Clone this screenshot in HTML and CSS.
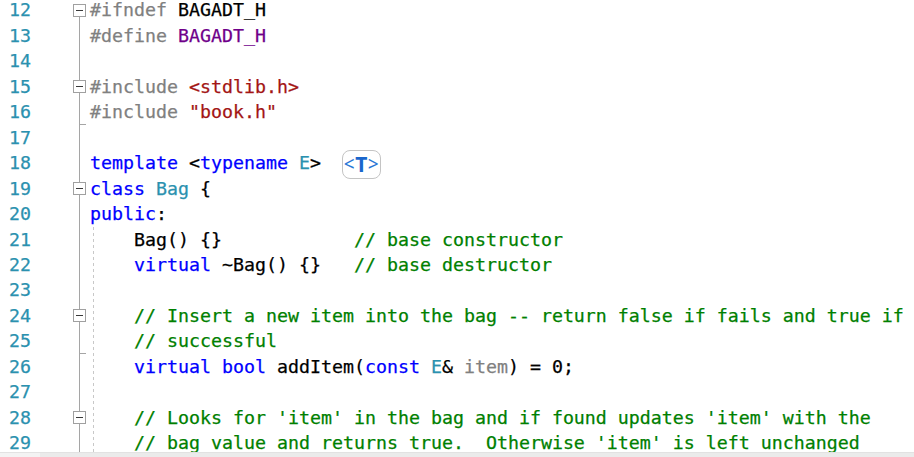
FILE: index.html
```html
<!DOCTYPE html>
<html>
<head>
<meta charset="utf-8">
<link rel="stylesheet" href="styles.css">
</head>
<body>
<div class="editor">
  <div class="lines">
    <div class="row"><span class="ln">12</span><span class="fold fs"><i class="fb"></i></span><span class="code"><span class="pp">#ifndef</span> BAGADT_H</span></div>
    <div class="row"><span class="ln">13</span><span class="fold v"></span><span class="code"><span class="pp">#define</span> <span class="mac">BAGADT_H</span></span></div>
    <div class="row"><span class="ln">14</span><span class="fold v"></span><span class="code"></span></div>
    <div class="row"><span class="ln">15</span><span class="fold v"><i class="fb"></i></span><span class="code"><span class="pp">#include</span> <span class="str">&lt;stdlib.h&gt;</span></span></div>
    <div class="row"><span class="ln">16</span><span class="fold ve"></span><span class="code"><span class="pp">#include</span> <span class="str">"book.h"</span></span></div>
    <div class="row"><span class="ln">17</span><span class="fold v"></span><span class="code"></span></div>
    <div class="row"><span class="ln">18</span><span class="fold v"></span><span class="code"><span class="kw">template</span> &lt;<span class="kw">typename</span> <span class="ty">E</span>&gt;<span class="hint">&lt;<b>T</b>&gt;</span></span></div>
    <div class="row"><span class="ln">19</span><span class="fold v"><i class="fb"></i></span><span class="code"><span class="kw">class</span> <span class="ty">Bag</span> {</span></div>
    <div class="row"><span class="ln">20</span><span class="fold v"></span><span class="code"><span class="kw">public</span>:</span></div>
    <div class="block">
      <div class="row"><span class="ln">21</span><span class="fold v"></span><span class="code">    Bag() {}            <span class="cm">// base constructor</span></span></div>
      <div class="row"><span class="ln">22</span><span class="fold v"></span><span class="code">    <span class="kw">virtual</span> ~Bag() {}   <span class="cm">// base destructor</span></span></div>
      <div class="row"><span class="ln">23</span><span class="fold v"></span><span class="code"></span></div>
      <div class="row"><span class="ln">24</span><span class="fold v"><i class="fb"></i></span><span class="code">    <span class="cm">// Insert a new item into the bag -- return false if fails and true if</span></span></div>
      <div class="row"><span class="ln">25</span><span class="fold ve"></span><span class="code">    <span class="cm">// successful</span></span></div>
      <div class="row"><span class="ln">26</span><span class="fold v"></span><span class="code">    <span class="kw">virtual</span> <span class="kw">bool</span> addItem(<span class="kw">const</span> <span class="ty">E</span>&amp; <span class="par">item</span>) = 0;</span></div>
      <div class="row"><span class="ln">27</span><span class="fold v"></span><span class="code"></span></div>
      <div class="row"><span class="ln">28</span><span class="fold v"><i class="fb"></i></span><span class="code">    <span class="cm">// Looks for 'item' in the bag and if found updates 'item' with the</span></span></div>
      <div class="row"><span class="ln">29</span><span class="fold v"></span><span class="code">    <span class="cm">// bag value and returns true.  Otherwise 'item' is left unchanged</span></span></div>
    </div>
  </div>
  <div class="hscroll"><span class="hs-left"></span><span class="hs-rest"></span></div>
</div>
</body>
</html>
```

FILE: styles.css
```css
html, body {
  margin: 0;
  padding: 0;
  background: #ffffff;
  overflow: hidden;
}

.editor {
  width: 914px;
  height: 457px;
  display: flex;
  flex-direction: column;
  overflow: hidden;
  background: #ffffff;
}

.lines {
  flex: 1;
  min-height: 0;
  overflow: hidden;
  margin-top: -2.7px;
}

.row {
  display: flex;
  height: 25.47px;
  line-height: 25.47px;
  font-family: "DejaVu Sans Mono", "Liberation Mono", monospace;
  font-size: 18.27px;
  white-space: pre;
  color: #000000;
  -webkit-text-stroke: 0.25px currentColor;
}

.ln {
  flex: none;
  width: 31px;
  text-align: right;
  color: #2b91af;
}

.fold {
  flex: none;
  width: 59px;
  display: flex;
  align-items: center;
}

.fold.v {
  background: linear-gradient(#a5a5a5, #a5a5a5) no-repeat 48px 0 / 1px 100%;
}

.fold.fs {
  background: linear-gradient(#a5a5a5, #a5a5a5) no-repeat 48px 100% / 1px 50%;
}

.fold.ve {
  background:
    linear-gradient(#a5a5a5, #a5a5a5) no-repeat 48px 100% / 7px 1px,
    linear-gradient(#a5a5a5, #a5a5a5) no-repeat 48px 0 / 1px 100%;
}

.fb {
  display: block;
  margin-left: 42px;
  width: 13px;
  height: 13px;
  box-sizing: border-box;
  border: 1px solid #a0a0a0;
  background: linear-gradient(#3a3a3a, #3a3a3a) no-repeat center / 7px 1px, #ffffff;
}

.code {
  flex: 1;
  display: block;
  white-space: pre;
}

.block {
  background: repeating-linear-gradient(to bottom, #c8c8c8 0 3px, transparent 3px 6px) no-repeat 93px 0 / 1px 100%;
}

.pp { color: #808080; }
.mac { color: #6f008a; }
.str { color: #a31515; }
.kw { color: #0000ff; }
.ty { color: #2b91af; }
.cm { color: #008000; }
.par { color: #808080; }

.hint {
  display: inline-flex;
  align-items: center;
  justify-content: center;
  vertical-align: middle;
  margin: -3px 0 -3px 21px;
  width: 39px;
  height: 29px;
  box-sizing: border-box;
  border: 1px solid #c4c4c4;
  border-radius: 8px;
  font-family: "Noto Sans", "Open Sans", sans-serif;
  font-size: 19px;
  line-height: 1;
  color: #2a78d6;
  letter-spacing: 0.5px;
  -webkit-text-stroke: 0;
}

.hint b {
  font-weight: 700;
  color: #1a66cc;
  font-size: 21px;
}

.hscroll {
  flex: none;
  height: 4px;
  display: flex;
  border-top: 1px solid #e2e2e2;
}

.hs-left {
  width: 40px;
  background: #f3f3f3;
}

.hs-rest {
  flex: 1;
  background: #ebebeb;
}
```
